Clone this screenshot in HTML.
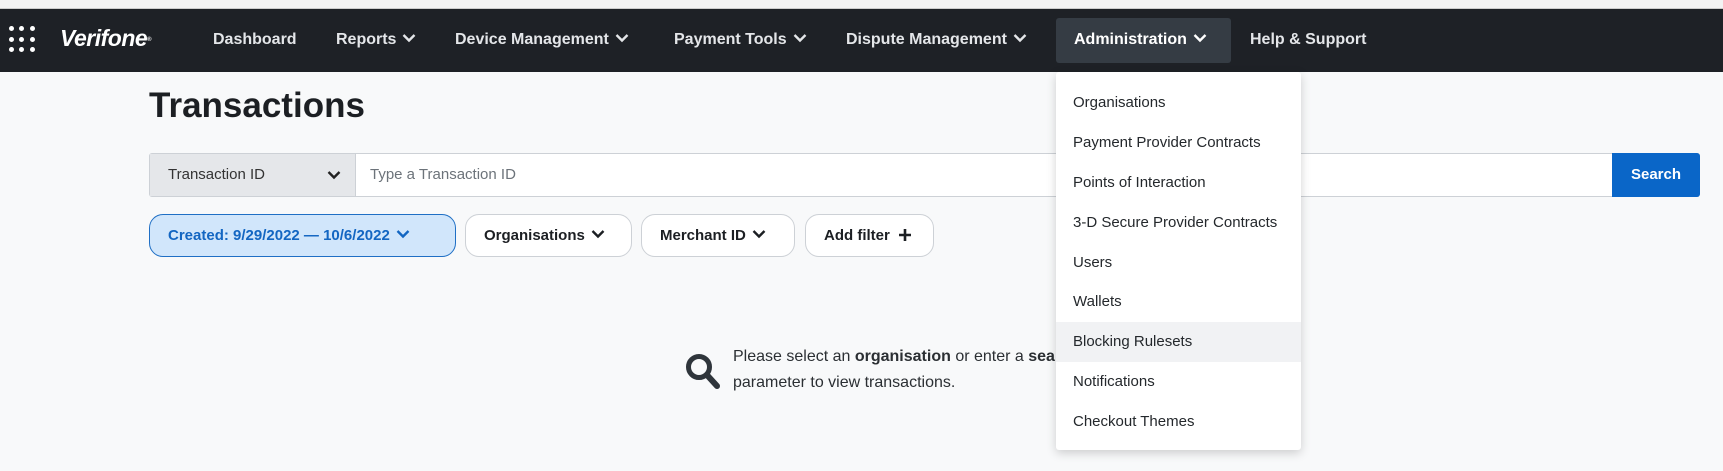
<!DOCTYPE html>
<html><head><meta charset="utf-8"><style>
*{margin:0;padding:0;box-sizing:border-box}
body{width:1723px;height:471px;background:#f8f9fa;font-family:"Liberation Sans",sans-serif;position:relative;overflow:hidden;color:#212529}
.strip{position:absolute;left:0;top:0;width:1723px;height:9px;background:#f3f3f3;border-bottom:1px solid #ccc}
.nav{position:absolute;left:0;top:9px;width:1723px;height:63px;background:#1e2126}
.dot{position:absolute;width:5px;height:5px;border-radius:50%;background:#fff}
.logo{position:absolute;left:60px;top:16px;color:#fff;font:italic bold 23px "Liberation Sans",sans-serif;letter-spacing:-0.5px}
.ni{position:absolute;top:22px;color:#e4e6e9;font-size:16px;font-weight:bold;white-space:nowrap}
.cv{display:inline-block;vertical-align:middle;margin-left:6px;position:relative;top:-2px}
.adm{position:absolute;left:1056px;top:9px;width:175px;height:45px;background:#353c44;border-radius:3px}
h1{position:absolute;left:149px;top:86px;font-size:35px;font-weight:bold;color:#1c1f23}
.bar{position:absolute;left:149px;top:153px;width:1551px;height:44px;border:1px solid #cdd1d6;border-radius:3px;background:#fff}
.sel{position:absolute;left:0;top:0;width:206px;height:42px;background:#e5e7ea;border-right:1px solid #cdd1d6;font-size:15px;padding:12px 0 0 18px;color:#333}
.ph{position:absolute;left:220px;top:12px;font-size:15px;color:#6c737a}
.btn{position:absolute;left:1612px;top:153px;width:88px;height:44px;background:#0a66c8;border-radius:0 3px 3px 0;color:#fff;font-weight:bold;font-size:15px;text-align:center;line-height:44px}
.chip{position:absolute;top:214px;height:43px;border:1px solid #cdd1d6;border-radius:14px;background:#fff;font-size:15px;font-weight:bold;line-height:41px;padding-left:18px;color:#1c1f23;white-space:nowrap}
.empty{position:absolute;left:733px;top:344px;font-size:16px;line-height:26px;color:#2b2f33}
.dd{position:absolute;left:1056px;top:72px;width:245px;height:378px;background:#fff;border-radius:3px;box-shadow:0 3px 10px rgba(0,0,0,.18)}
.it{position:absolute;left:0;width:245px;height:40px;padding-left:17px;line-height:40px;font-size:15px;color:#24282c}
</style></head><body>
<div class="strip"></div>
<div class="nav">
<div class="dot" style="left:9px;top:17px"></div><div class="dot" style="left:19px;top:17px"></div><div class="dot" style="left:30px;top:17px"></div>
<div class="dot" style="left:9px;top:28px"></div><div class="dot" style="left:19px;top:28px"></div><div class="dot" style="left:30px;top:28px"></div>
<div class="dot" style="left:9px;top:38px"></div><div class="dot" style="left:19px;top:38px"></div><div class="dot" style="left:30px;top:38px"></div>
<div class="logo">Verifone<span style="font-size:6px;vertical-align:middle;font-style:normal">®</span></div>
<div class="adm"></div>
<div class="ni" style="left:213px">Dashboard</div>
<div class="ni" style="left:336px">Reports<svg class="cv" width="14" height="10" viewBox="0 0 14 10"><path d="M1.5 2l5.5 5.5L12.5 2" fill="none" stroke="currentColor" stroke-width="2.4"/></svg></div>
<div class="ni" style="left:455px">Device Management<svg class="cv" width="14" height="10" viewBox="0 0 14 10"><path d="M1.5 2l5.5 5.5L12.5 2" fill="none" stroke="currentColor" stroke-width="2.4"/></svg></div>
<div class="ni" style="left:674px">Payment Tools<svg class="cv" width="14" height="10" viewBox="0 0 14 10"><path d="M1.5 2l5.5 5.5L12.5 2" fill="none" stroke="currentColor" stroke-width="2.4"/></svg></div>
<div class="ni" style="left:846px">Dispute Management<svg class="cv" width="14" height="10" viewBox="0 0 14 10"><path d="M1.5 2l5.5 5.5L12.5 2" fill="none" stroke="currentColor" stroke-width="2.4"/></svg></div>
<div class="ni" style="left:1074px;color:#fff">Administration<svg class="cv" width="14" height="10" viewBox="0 0 14 10"><path d="M1.5 2l5.5 5.5L12.5 2" fill="none" stroke="currentColor" stroke-width="2.4"/></svg></div>
<div class="ni" style="left:1250px">Help &amp; Support</div>
</div>
<h1>Transactions</h1>
<div class="bar"><div class="sel">Transaction ID<svg style="position:absolute;left:177px;top:16px" width="14" height="10" viewBox="0 0 14 10"><path d="M1.5 2l5.5 5.5L12.5 2" fill="none" stroke="#222" stroke-width="2.4"/></svg></div><div class="ph">Type a Transaction ID</div></div>
<div class="btn">Search</div>
<div class="chip" style="left:149px;width:307px;background:#d1e6fb;border-color:#1f6fc5;color:#1366c2">Created: 9/29/2022 — 10/6/2022<svg class="cv" width="14" height="10" viewBox="0 0 14 10"><path d="M1.5 2l5.5 5.5L12.5 2" fill="none" stroke="currentColor" stroke-width="2.4"/></svg></div>
<div class="chip" style="left:465px;width:167px">Organisations<svg class="cv" width="14" height="10" viewBox="0 0 14 10"><path d="M1.5 2l5.5 5.5L12.5 2" fill="none" stroke="currentColor" stroke-width="2.4"/></svg></div>
<div class="chip" style="left:641px;width:154px">Merchant ID<svg class="cv" width="14" height="10" viewBox="0 0 14 10"><path d="M1.5 2l5.5 5.5L12.5 2" fill="none" stroke="currentColor" stroke-width="2.4"/></svg></div>
<div class="chip" style="left:805px;width:129px">Add filter<svg class="cv" style="margin-left:8px;top:-1px" width="14" height="14" viewBox="0 0 14 14"><path d="M7 1v12M1 7h12" stroke="#1c1f23" stroke-width="2.6"/></svg></div>
<svg style="position:absolute;left:684px;top:352px" width="37" height="38" viewBox="0 0 37 38"><circle cx="15" cy="15" r="10.5" fill="none" stroke="#2f353b" stroke-width="5"/><line x1="23" y1="23" x2="33" y2="34" stroke="#2f353b" stroke-width="6" stroke-linecap="round"/></svg>
<div class="empty">Please select an <b>organisation</b> or enter a <b>search</b><br>parameter to view transactions.</div>
<div class="dd">
<div class="it" style="top:11px">Organisations</div>
<div class="it" style="top:51px">Payment Provider Contracts</div>
<div class="it" style="top:91px">Points of Interaction</div>
<div class="it" style="top:131px">3-D Secure Provider Contracts</div>
<div class="it" style="top:171px">Users</div>
<div class="it" style="top:210px">Wallets</div>
<div class="it" style="top:250px;background:#f1f2f4">Blocking Rulesets</div>
<div class="it" style="top:290px">Notifications</div>
<div class="it" style="top:330px">Checkout Themes</div>
</div>
</body></html>
